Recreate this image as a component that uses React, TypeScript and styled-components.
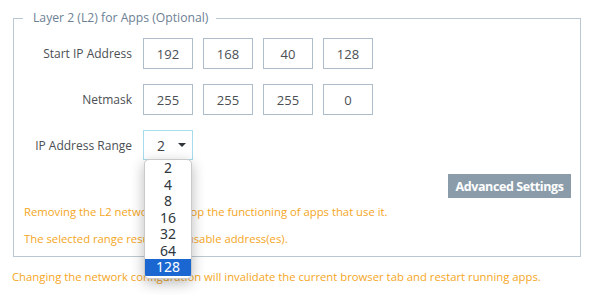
import React from "react";
import styled, { createGlobalStyle } from "styled-components";

const Global = createGlobalStyle`
  html, body { margin: 0; padding: 0; background: #ffffff; }
  body { font-family: "Open Sans", "Noto Sans", sans-serif; }
  * { box-sizing: border-box; }
`;

const Page = styled.div`
  width: 591px;
  height: 295px;
  padding: 9px 10px 0 13px;
  position: relative;
  overflow: hidden;
`;

const Fieldset = styled.fieldset`
  margin: 0;
  padding: 0;
  border: 1px solid #bcc8d1;
  min-width: 0;
  height: 248px;
  position: relative;
`;

const Legend = styled.legend`
  margin-left: 9px;
  padding: 0 8px 0 10px;
  font-size: 12.2px;
  color: #6c8194;
  line-height: 18px;
`;

const FormGrid = styled.div`
  display: grid;
  grid-template-columns: 118px auto;
  column-gap: 11px;
  row-gap: 15px;
  margin-top: 11px;
  align-items: center;
`;

const Label = styled.div`
  text-align: right;
  font-size: 12px;
  color: #4b4f54;
`;

const Octets = styled.div`
  display: flex;
  gap: 10px;
`;

const Octet = styled.div`
  width: 50px;
  height: 31px;
  border: 1px solid #aebdc9;
  display: flex;
  align-items: center;
  justify-content: center;
  font-size: 13px;
  color: #4b4f54;
`;

const SelectWrap = styled.div`
  position: relative;
  width: 50px;
`;

const Select = styled.div`
  width: 50px;
  height: 30px;
  border: 1px solid #a7dcea;
  display: flex;
  align-items: center;
  padding-left: 13px;
  gap: 13px;
  font-size: 14px;
  color: #3d4247;
`;

const Caret = styled.span`
  width: 0;
  height: 0;
  border-left: 4px solid transparent;
  border-right: 4px solid transparent;
  border-top: 4px solid #2d3338;
`;

const DropList = styled.ul`
  position: absolute;
  top: 29px;
  left: 1px;
  width: 48px;
  margin: 0;
  padding: 0 0 2px 0;
  list-style: none;
  background: #ffffff;
  border: 1px solid #c9c9c9;
  border-radius: 5px;
  box-shadow: 0 4px 14px rgba(0, 0, 0, 0.28);
  z-index: 10;
  overflow: hidden;
`;

const DropItem = styled.li<{ $active?: boolean }>`
  height: 16.5px;
  line-height: 16.5px;
  text-align: center;
  font-size: 14px;
  font-family: "Noto Sans", sans-serif;
  color: ${(p) => (p.$active ? "#ffffff" : "#2e3740")};
  background: ${(p) => (p.$active ? "#1a67d2" : "transparent")};
`;

const ButtonRow = styled.div`
  display: flex;
  justify-content: flex-end;
  padding-right: 9px;
  margin-top: 14px;
`;

const AdvButton = styled.button`
  height: 24px;
  width: 123px;
  border: none;
  background: #8a9caa;
  color: #ffffff;
  font-family: "Open Sans", sans-serif;
  font-weight: 700;
  font-size: 12.5px;
  letter-spacing: -0.4px;
  padding: 0;
`;

const Warnings = styled.div`
  display: flex;
  flex-direction: column;
  gap: 11px;
  padding-left: 10px;
  margin-top: 6px;
`;

const Warning = styled.div`
  font-size: 11.3px;
  color: #f5a623;
  line-height: 16px;
`;

const Footer = styled.div`
  margin-top: 12px;
  margin-left: -1px;
  font-size: 11.3px;
  color: #f5a623;
  line-height: 16px;
`;

const options = [2, 4, 8, 16, 32, 64, 128];

export default function App() {
  return (
    <>
      <Global />
      <Page>
        <Fieldset>
          <Legend>Layer 2 (L2) for Apps (Optional)</Legend>
          <FormGrid>
            <Label>Start IP Address</Label>
            <Octets>
              {["192", "168", "40", "128"].map((v) => (
                <Octet key={v}>{v}</Octet>
              ))}
            </Octets>
            <Label>Netmask</Label>
            <Octets>
              {["255", "255", "255", "0"].map((v, i) => (
                <Octet key={i}>{v}</Octet>
              ))}
            </Octets>
            <Label>IP Address Range</Label>
            <SelectWrap>
              <Select>
                2<Caret />
              </Select>
              <DropList>
                {options.map((o) => (
                  <DropItem key={o} $active={o === 128}>
                    {o}
                  </DropItem>
                ))}
              </DropList>
            </SelectWrap>
          </FormGrid>
          <ButtonRow>
            <AdvButton>Advanced Settings</AdvButton>
          </ButtonRow>
          <Warnings>
            <Warning>Removing the L2 network will stop the functioning of apps that use it.</Warning>
            <Warning>The selected range results in 0 usable address(es).</Warning>
          </Warnings>
        </Fieldset>
        <Footer>
          Changing the network configuration will invalidate the current browser tab and restart running apps.
        </Footer>
      </Page>
    </>
  );
}
